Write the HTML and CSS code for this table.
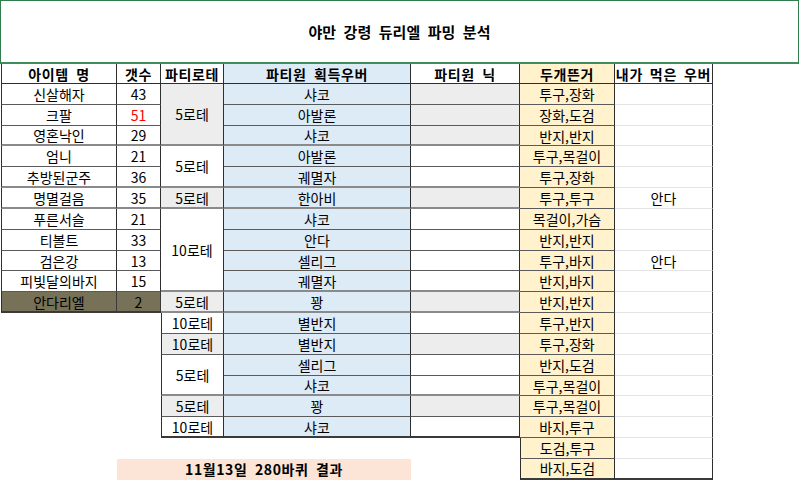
FILE: index.html
```html
<!DOCTYPE html>
<html lang="ko">
<head>
<meta charset="utf-8">
<link rel="stylesheet" href="styles.css">
</head>
<body>
<div class="title">야만 강령 듀리엘 파밍 분석</div>
<div class="sheet">
  <div class="c h bl">아이템 명</div><div class="c h">갯수</div><div class="c h">파티로테</div><div class="c h blue">파티원 획득우버</div><div class="c h">파티원 닉</div><div class="c h yel">두개뜬거</div><div class="c h tight">내가 먹은 우버</div>

  <div class="c bl">신살해자</div><div class="c">43</div><div class="c r3 gray gb">5로테</div><div class="c blue">샤코</div><div class="c gray"></div><div class="c yel">투구,장화</div><div class="c me"></div>
  <div class="c bl">크팔</div><div class="c red">51</div><div class="c blue">아발론</div><div class="c gray"></div><div class="c yel">장화,도검</div><div class="c me"></div>
  <div class="c bl gb">영혼낙인</div><div class="c gb">29</div><div class="c blue gb">샤코</div><div class="c gray gb"></div><div class="c yel">반지,반지</div><div class="c me"></div>

  <div class="c bl">엄니</div><div class="c">21</div><div class="c r2 gb">5로테</div><div class="c blue">아발론</div><div class="c"></div><div class="c yel">투구,목걸이</div><div class="c me"></div>
  <div class="c bl gb">추방된군주</div><div class="c gb">36</div><div class="c blue gb">궤멸자</div><div class="c gb"></div><div class="c yel">투구,장화</div><div class="c me"></div>

  <div class="c bl gb">명멸걸음</div><div class="c gb">35</div><div class="c gray gb">5로테</div><div class="c blue gb">한아비</div><div class="c gray gb"></div><div class="c yel">투구,투구</div><div class="c me">안다</div>

  <div class="c bl">푸른서슬</div><div class="c">21</div><div class="c r4 gb">10로테</div><div class="c blue">샤코</div><div class="c"></div><div class="c yel">목걸이,가슴</div><div class="c me"></div>
  <div class="c bl">티볼트</div><div class="c">33</div><div class="c blue">안다</div><div class="c"></div><div class="c yel">반지,반지</div><div class="c me"></div>
  <div class="c bl">검은강</div><div class="c">13</div><div class="c blue">셀리그</div><div class="c"></div><div class="c yel">투구,바지</div><div class="c me">안다</div>
  <div class="c bl">피빛달의바지</div><div class="c">15</div><div class="c blue gb">궤멸자</div><div class="c gb"></div><div class="c yel">반지,바지</div><div class="c me"></div>

  <div class="c bl olive end">안다리엘</div><div class="c olive end">2</div><div class="c gray gb">5로테</div><div class="c blue gb">꽝</div><div class="c gray gb"></div><div class="c yel">반지,반지</div><div class="c me"></div>

  <div class="e"></div><div class="e"></div><div class="c bl">10로테</div><div class="c blue">별반지</div><div class="c"></div><div class="c yel">투구,반지</div><div class="c me"></div>
  <div class="e"></div><div class="e"></div><div class="c bl gray">10로테</div><div class="c blue">별반지</div><div class="c gray"></div><div class="c yel">투구,장화</div><div class="c me"></div>
  <div class="e"></div><div class="e"></div><div class="c bl r2 gb">5로테</div><div class="c blue">셀리그</div><div class="c"></div><div class="c yel">반지,도검</div><div class="c me"></div>
  <div class="e"></div><div class="e"></div><div class="c blue gb">샤코</div><div class="c gb"></div><div class="c yel">투구,목걸이</div><div class="c me"></div>
  <div class="e"></div><div class="e"></div><div class="c bl gray">5로테</div><div class="c blue">꽝</div><div class="c gray"></div><div class="c yel">투구,목걸이</div><div class="c me"></div>
  <div class="e"></div><div class="e"></div><div class="c bl end">10로테</div><div class="c blue end">샤코</div><div class="c end"></div><div class="c yel">바지,투구</div><div class="c me"></div>

  <div class="e"></div><div class="e"></div><div class="e"></div><div class="e"></div><div class="e"></div><div class="c yel bl">도검,투구</div><div class="c me"></div>
  <div class="e"></div><div class="summary">11월13일 280바퀴 결과</div><div class="e"></div><div class="c yel bl end">바지,도검</div><div class="c me end"></div>
</div>
</body>
</html>
```
FILE: styles.css
```css
html, body {
  margin: 0;
  padding: 0;
  background: #ffffff;
}
body {
  font-family: "Noto Sans CJK KR", "Noto Sans", sans-serif;
  font-size: 14px;
  color: #000;
  width: 800px;
  height: 486px;
  overflow: hidden;
}
.title {
  box-sizing: border-box;
  height: 64px;
  width: 799px;
  border: 1px solid #2f7d4c;
  border-bottom: 2px solid #3f8d5c;
  display: flex;
  align-items: center;
  justify-content: center;
  font-weight: bold;
  font-size: 15px;
  letter-spacing: 0.1px;
  word-spacing: 3px;
  padding-bottom: 1px;
}
.sheet {
  display: grid;
  margin-left: 1px;
  grid-template-columns: 116px 44px 63px 187px 109px 95px 98px;
  grid-template-rows: 20px repeat(19, 20.84px);
  width: 712px;
}
.c {
  box-sizing: border-box;
  border-right: 1px solid #2e2e2e;
  border-bottom: 1px solid #5a5a5a;
  display: flex;
  align-items: center;
  justify-content: center;
  white-space: nowrap;
  overflow: hidden;
  line-height: 1;
}
.h {
  font-weight: bold;
  border-bottom: 1px solid #2e2e2e;
  letter-spacing: 0.6px;
  word-spacing: 3px;
}
.h.tight {
  letter-spacing: 0.8px;
  word-spacing: 2px;
}
.bl {
  border-left: 1px solid #2e2e2e;
}
.gb {
  border-bottom: 2px solid #8a8a8a;
}
.end {
  border-bottom: 2px solid #3a3a3a;
}
.r2 { grid-row: span 2; }
.r3 { grid-row: span 3; }
.r4 { grid-row: span 4; }
.blue { background: #ddebf7; }
.gray { background: #ededed; }
.yel { background: #fff2cc; }
.olive { background: #767157; border-right-color: #3a3a3a; }
.red { color: #ff0000; }
.me {
  border-bottom: 1px solid #e4e4e4;
}
.me.end {
  border-bottom: 2px solid #3a3a3a;
}
.summary {
  grid-column: span 3;
  background: #fce4d6;
  font-weight: bold;
  letter-spacing: 0.6px;
  word-spacing: 3px;
  display: flex;
  align-items: center;
  justify-content: center;
  white-space: nowrap;
}
.e {
  min-width: 0;
}
```
